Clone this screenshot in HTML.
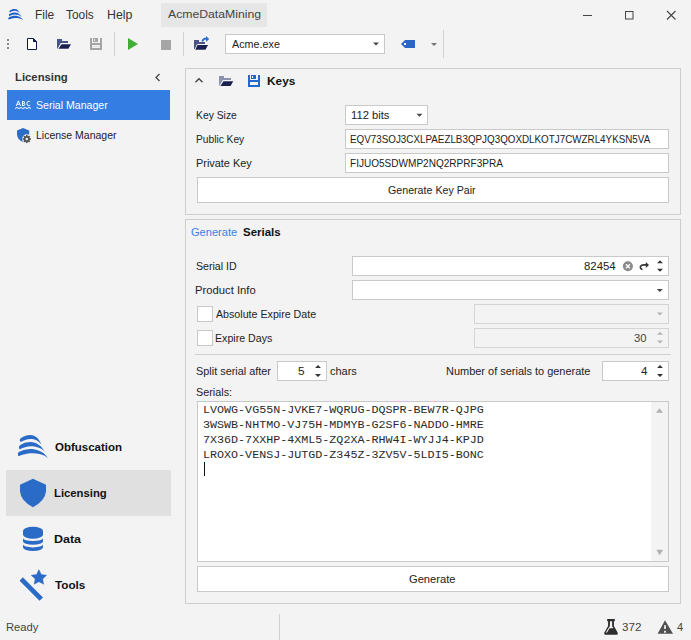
<!DOCTYPE html>
<html><head><meta charset="utf-8">
<style>
html,body{margin:0;padding:0;background:#f3f3f3;}
body{width:691px;height:640px;overflow:hidden;background:#f3f3f3;position:relative;font-family:"Liberation Sans",sans-serif;}
.a{position:absolute;box-sizing:border-box;}
.t{position:absolute;white-space:pre;line-height:20px;font-family:"Liberation Sans",sans-serif;transform-origin:0 0;}
.box{position:absolute;box-sizing:border-box;border:1px solid #c9c9c9;background:#fff;}
.pnl{position:absolute;box-sizing:border-box;border:1px solid #cdcdcd;background:#f3f3f3;}
.sep{position:absolute;background:#cfcfcf;}
svg{position:absolute;overflow:visible;}
</style></head><body>
<!-- title bar -->
<div class="a" style="left:161px;top:3px;width:106px;height:24px;background:#e6e6e6"></div>
<svg style="left:0;top:0" width="691" height="30" viewBox="0 0 691 30">
  <g fill="#1f5fc8" transform="translate(-0.6 -208.6) scale(0.5)"><path d="M20.50 438.50 C23.40 436.30 26.40 435.10 30.40 435.10 C35.40 435.10 38.80 438.60 41.30 444.60 C38.30 440.40 34.90 438.90 30.40 438.90 C26.40 438.90 23.90 440.40 21.20 441.70 C19.70 442.20 19.30 439.50 20.50 438.50 Z"/><path d="M19.70 445.40 C22.60 443.20 26.80 442.00 30.80 442.00 C35.80 442.00 42.10 445.80 44.60 451.80 C41.60 447.60 35.30 446.30 30.80 446.30 C26.80 446.30 23.10 447.80 20.40 449.10 C18.90 449.60 18.50 446.40 19.70 445.40 Z"/><path d="M18.60 452.30 C21.50 450.10 27.80 448.90 31.80 448.90 C36.80 448.90 45.40 452.40 47.90 458.40 C44.90 454.20 36.30 453.30 31.80 453.30 C27.80 453.30 22.00 454.80 19.30 456.10 C17.80 456.60 17.40 453.30 18.60 452.30 Z"/></g>
  <rect x="583" y="15" width="9" height="1" fill="#444"/>
  <rect x="625.5" y="11.5" width="7.5" height="7.5" fill="none" stroke="#444" stroke-width="1"/>
  <path d="M667 11 L675.5 19.5 M675.5 11 L667 19.5" stroke="#444" stroke-width="1.1" fill="none"/>
</svg>
<!-- toolbar -->
<svg style="left:0;top:30px" width="691" height="30" viewBox="0 30 691 30">
  <g fill="#8a8a8a"><rect x="7" y="39" width="2" height="2"/><rect x="7" y="43" width="2" height="2"/><rect x="7" y="47" width="2" height="2"/></g>
  <!-- new doc -->
  <path d="M27.5 38.5 H33.5 L36.5 41.5 V49.5 H27.5 Z" fill="#fff" stroke="#0f1a4a" stroke-width="1"/>
  <path d="M33 38 V42 H37 Z" fill="#0f1a4a"/>
  <!-- open folder -->
  <path d="M57 39 H62 V41 H68 V43 H61 L57.6 48.5 H57 Z" fill="#4b5488"/>
  <path d="M60.8 43.6 H72 L68.8 49.4 H57.6 Z" fill="#fff"/>
  <path d="M61.5 44.2 H71 L68.4 48.8 H58.4 Z" fill="#1a2150"/>
  <!-- save gray -->
  <g fill="#a5a5a5">
    <rect x="90" y="38" width="2" height="12"/><rect x="100" y="38" width="2" height="12"/>
    <rect x="90" y="48" width="12" height="2"/><rect x="90" y="43" width="12" height="2"/>
    <path d="M93 38 H98 V42 H93 Z M94 39 V41 H95 V39 Z" fill-rule="evenodd"/>
    <rect x="92" y="46" width="8" height="1" fill="#e0e0e0"/>
  </g>
  <rect x="114" y="32" width="1" height="24" fill="#d2d2d2"/>
  <path d="M128 38 L138 44 L128 50 Z" fill="#41ad35"/>
  <rect x="161" y="40" width="10" height="10" fill="#a5a5a5"/>
  <rect x="183" y="32" width="1" height="24" fill="#d2d2d2"/>
  <!-- open export -->
  <path d="M194 40 H199 V42 H205 V44 H198 L194.6 49 H194 Z" fill="#4b5488"/>
  <path d="M196.8 44.4 H209 L205.9 50.3 H194.6 Z" fill="#fff"/>
  <path d="M197.5 45 H208 L205.5 49.7 H195.2 Z" fill="#1a2150"/>
  <path d="M202.2 41.5 Q203 38.5 206.5 38.4" stroke="#2a6dd6" stroke-width="1.8" fill="none"/>
  <path d="M206 36 L209.2 39 L206 42 Z" fill="#2a6dd6"/>
  <rect x="443" y="30" width="1" height="28" fill="#d2d2d2"/>
  <!-- tag -->
  <path d="M401 44 L405 40 H415 V48 H405 Z M404 43 V45 H406 V43 Z" fill="#2a66c8" fill-rule="evenodd"/>
  <path d="M431 43 H437 L434 46 Z" fill="#777"/>
</svg>
<div class="box" style="left:225px;top:34px;width:160px;height:20px"></div>
<svg style="left:0;top:0" width="691" height="640" viewBox="0 0 691 640">
  <path d="M373 42.5 H379 L376 45.5 Z" fill="#444"/>
</svg>

<!-- sidebar -->
<svg style="left:0;top:60px" width="185" height="100" viewBox="0 60 185 100">
  <path d="M159.5 74 L156 77.5 L159.5 81" stroke="#444" stroke-width="1.3" fill="none"/>
</svg>
<div class="a" style="left:7px;top:90px;width:163px;height:30px;background:#337de3"></div>
<svg style="left:0;top:90px" width="185" height="60" viewBox="0 90 185 60">
  <g fill="none" stroke="#fff" stroke-width="1">
    <path d="M16.3 106 L18.4 100.8 L20.5 106 M17.2 104.2 H19.6"/>
    <path d="M22.5 101 V106 M22 101.5 H23.7 Q24.5 101.5 24.5 102.4 Q24.5 103.3 23.7 103.4 H22.5 M22 105.5 H23.9 Q24.8 105.5 24.8 104.5 Q24.8 103.5 23.9 103.4"/>
    <path d="M30.2 101.8 Q29.7 101.3 28.8 101.3 Q26.9 101.4 26.9 103.5 Q26.9 105.6 28.8 105.7 Q29.7 105.7 30.2 105.2"/>
    <path d="M15 108.5 L17 107.5 L19 108.5 L21 107.5 L23 108.5 L25 107.5 L27 108.5 L29 107.5 L31 108.5"/>
  </g>
  <path d="M23 128 L17 130.6 V134.5 Q17.4 139.8 23 142 Q28.6 139.8 29.2 134.5 V130.6 Z" fill="#2c6cc9"/>
  <g transform="translate(26.8 139)">
    <circle r="4.7" fill="#f3f3f3"/>
    <g fill="#555">
      <circle r="3"/>
      <rect x="-0.8" y="-4.1" width="1.6" height="8.2"/>
      <rect x="-4.1" y="-0.8" width="8.2" height="1.6"/>
      <rect x="-0.8" y="-4.1" width="1.6" height="8.2" transform="rotate(45)"/>
      <rect x="-4.1" y="-0.8" width="8.2" height="1.6" transform="rotate(45)"/>
    </g>
    <circle r="1.2" fill="#f3f3f3"/>
  </g>
</svg>
<div class="a" style="left:6px;top:470px;width:165px;height:46px;background:#e0e0e0"></div>
<svg style="left:0;top:420px" width="185" height="190" viewBox="0 420 185 190">
  <g fill="#2a6bc8"><path d="M20.50 438.50 C23.40 436.30 26.40 435.10 30.40 435.10 C35.40 435.10 38.80 438.60 41.30 444.60 C38.30 440.40 34.90 438.90 30.40 438.90 C26.40 438.90 23.90 440.40 21.20 441.70 C19.70 442.20 19.30 439.50 20.50 438.50 Z"/><path d="M19.70 445.40 C22.60 443.20 26.80 442.00 30.80 442.00 C35.80 442.00 42.10 445.80 44.60 451.80 C41.60 447.60 35.30 446.30 30.80 446.30 C26.80 446.30 23.10 447.80 20.40 449.10 C18.90 449.60 18.50 446.40 19.70 445.40 Z"/><path d="M18.60 452.30 C21.50 450.10 27.80 448.90 31.80 448.90 C36.80 448.90 45.40 452.40 47.90 458.40 C44.90 454.20 36.30 453.30 31.80 453.30 C27.80 453.30 22.00 454.80 19.30 456.10 C17.80 456.60 17.40 453.30 18.60 452.30 Z"/></g>
  <path d="M32.9 478.7 L20 484.7 V491.2 Q20.6 500.5 32.9 507.3 Q45.2 500.5 46 491.2 V484.7 Z" fill="#2a6bc8"/>
  <g fill="#2a6bc8">
    <path d="M23 531 A10 4.2 0 0 1 43 531 V534.4 A10 4.3 0 0 1 23 534.4 Z"/>
    <path d="M23 538.2 A10 2.8 0 0 0 43 538.2 V541.6 A10 3.2 0 0 1 23 541.6 Z"/>
    <path d="M23 544.6 A10 2.8 0 0 0 43 544.6 V547.2 A10 3.9 0 0 1 23 547.2 Z"/>
  </g>
  <path d="M22.8 577.3 L19.6 580.8 L39.5 600.7 L43 597.5 Z" fill="#2a6bc8"/>
  <path fill="#2a6bc8" stroke="#2a6bc8" stroke-width="0.4" stroke-linejoin="round" d="M38.90 569.60 L41.25 574.46 L46.60 575.20 L42.70 578.94 L43.66 584.25 L38.90 581.70 L34.14 584.25 L35.10 578.94 L31.20 575.20 L36.55 574.46 Z"/>
</svg>

<!-- Keys panel -->
<div class="pnl" style="left:185px;top:68px;width:496px;height:147px"></div>
<svg style="left:185px;top:68px" width="496" height="40" viewBox="185 68 496 40">
  <path d="M195.5 82.3 L199 78.8 L202.5 82.3" stroke="#444" stroke-width="1.4" fill="none"/>
  <path d="M219 76 H224 V78 H231 V80 H223 L219.6 85.5 H219 Z" fill="#8d92ad"/>
  <path d="M222.8 80.6 H234.2 L231 86.6 H219.5 Z" fill="#f3f3f3"/>
  <path d="M223.5 81.2 H233.2 L230.6 86 H220.4 Z" fill="#1a2150"/>
  <g fill="#2466d0">
    <rect x="248" y="75" width="2" height="12"/><rect x="258" y="75" width="2" height="12"/>
    <rect x="248" y="85" width="12" height="2"/><rect x="248" y="80" width="12" height="2"/>
    <path d="M251 75 H256 V79 H251 Z M252 76 V78 H253 V76 Z" fill-rule="evenodd"/>
  </g>
</svg>
<div class="box" style="left:345px;top:105px;width:83px;height:20px"></div>
<div class="box" style="left:345px;top:129px;width:324px;height:20px"></div>
<div class="box" style="left:345px;top:153px;width:324px;height:20px"></div>
<div class="box" style="left:197px;top:177px;width:472px;height:26px"></div>

<!-- Serials panel -->
<div class="pnl" style="left:185px;top:219px;width:496px;height:385px"></div>
<div class="box" style="left:352px;top:256px;width:317px;height:20px"></div>
<div class="box" style="left:352px;top:280px;width:317px;height:20px"></div>
<div class="box" style="left:197px;top:306px;width:16px;height:16px"></div>
<div class="box" style="left:197px;top:330px;width:16px;height:16px"></div>
<div class="box" style="left:474px;top:304px;width:195px;height:20px;background:#f3f3f3;border-color:#d4d4d4"></div>
<div class="box" style="left:474px;top:328px;width:195px;height:20px;background:#f3f3f3;border-color:#d4d4d4"></div>
<div class="sep" style="left:195px;top:354px;width:476px;height:1px"></div>
<div class="box" style="left:277px;top:361px;width:50px;height:20px"></div>
<div class="box" style="left:602px;top:361px;width:67px;height:20px"></div>
<div class="box" style="left:197px;top:401px;width:472px;height:161px"></div>
<div class="a" style="left:651px;top:402px;width:17px;height:159px;background:#f3f3f3"></div>
<div class="a" style="left:204px;top:462px;width:1px;height:14px;background:#111"></div>
<div class="box" style="left:197px;top:566px;width:472px;height:26px"></div>
<svg style="left:0;top:0" width="691" height="640" viewBox="0 0 691 640">
  <!-- key size arrow -->
  <path d="M416.5 113.8 H422.5 L419.5 116.8 Z" fill="#444"/>
  <!-- serial id icons -->
  <circle cx="627.9" cy="266.2" r="5" fill="#8a8a8a"/>
  <path d="M625.9 264.2 L629.9 268.2 M629.9 264.2 L625.9 268.2" stroke="#fff" stroke-width="1.3"/>
  <path d="M642.4 269.6 Q639.6 268.2 640.6 266.2 Q641.6 264.8 644.2 264.9 H647" stroke="#333" stroke-width="1.6" fill="none"/>
  <path d="M645.8 261.9 L649 264.9 L645.8 267.9 Z" fill="#333"/>
  <path d="M657 263.2 L660 260.2 L663 263.2 Z M657 268.8 L660 271.8 L663 268.8 Z" fill="#333"/>
  <!-- product info arrow -->
  <path d="M656.8 289 H662.8 L659.8 292 Z" fill="#444"/>
  <!-- disabled -->
  <path d="M656.8 312.5 H662.8 L659.8 315.5 Z" fill="#b5b5b5"/>
  <path d="M657 334.8 L660 331.8 L663 334.8 Z M657 340.6 L660 343.6 L663 340.6 Z" fill="#b5b5b5"/>
  <!-- spins -->
  <path d="M315 368.1 L318 365.1 L321 368.1 Z M315 373.9 L318 376.9 L321 373.9 Z" fill="#333"/>
  <path d="M657 368.1 L660 365.1 L663 368.1 Z M657 373.9 L660 376.9 L663 373.9 Z" fill="#333"/>
  <!-- textarea scroll arrows -->
  <path d="M656 412.8 L659.5 408.2 L663 412.8 Z" fill="#b0b0b0"/>
  <path d="M656.4 549.8 H663 L659.7 555.2 Z" fill="#b0b0b0"/>
  <!-- status -->
  <rect x="279" y="614" width="1" height="26" fill="#d0d0d0"/>
  <path d="M607.2 619 H614.8 V621.2 H613.9 V626 L617.6 632.4 Q618.4 634.7 616 634.7 H606 Q603.6 634.7 604.4 632.4 L608.1 626 V621.2 H607.2 Z" fill="#2d2d2d"/>
  <path d="M610 621.3 H612.1 V626.2 L613.5 628.2 H609.6 L606.9 632.8 L605.9 632.3 L609.9 626 Z" fill="#f3f3f3"/>
  <path d="M665 620.3 L673 633.7 H657.6 Z" fill="#505050"/>
  <rect x="664.1" y="625.2" width="1.8" height="3.7" fill="#f3f3f3"/>
  <rect x="664.1" y="630.8" width="1.8" height="1.9" fill="#f3f3f3"/>
</svg>
<div class="t" style="left:34.61px;top:4.50px;font-size:12px;font-weight:400;color:#333;transform:scaleX(0.9889)">File</div>
<div class="t" style="left:66.30px;top:4.50px;font-size:12px;font-weight:400;color:#333;transform:scaleX(0.9893)">Tools</div>
<div class="t" style="left:106.67px;top:4.50px;font-size:12px;font-weight:400;color:#333;transform:scaleX(1.0304)">Help</div>
<div class="t" style="left:167.50px;top:4.30px;font-size:11px;font-weight:400;color:#444;transform:scaleX(1.1108)">AcmeDataMining</div>
<div class="t" style="left:232.00px;top:34.00px;font-size:11px;font-weight:400;color:#222;transform:scaleX(0.9792)">Acme.exe</div>
<div class="t" style="left:14.87px;top:67.40px;font-size:11px;font-weight:700;color:#333;transform:scaleX(1.0280)">Licensing</div>
<div class="t" style="left:35.54px;top:94.70px;font-size:11px;font-weight:400;color:#fff;transform:scaleX(0.9616)">Serial Manager</div>
<div class="t" style="left:35.55px;top:124.80px;font-size:11px;font-weight:400;color:#222;transform:scaleX(0.9542)">License Manager</div>
<div class="t" style="left:267.12px;top:70.80px;font-size:11px;font-weight:700;color:#111;transform:scaleX(1.0760)">Keys</div>
<div class="t" style="left:195.56px;top:105.10px;font-size:11px;font-weight:400;color:#222;transform:scaleX(0.9405)">Key Size</div>
<div class="t" style="left:195.57px;top:129.00px;font-size:11px;font-weight:400;color:#222;transform:scaleX(0.9275)">Public Key</div>
<div class="t" style="left:195.51px;top:152.90px;font-size:11px;font-weight:400;color:#222;transform:scaleX(0.9909)">Private Key</div>
<div class="t" style="left:350.58px;top:105.00px;font-size:11px;font-weight:400;color:#222;transform:scaleX(1.0194)">112 bits</div>
<div class="t" style="left:349.71px;top:129.00px;font-size:11px;font-weight:400;color:#222;transform:scaleX(0.8940)">EQV73SOJ3CXLPAEZLB3QPJQ3QOXDLKOTJ7CWZRL4YKSN5VA</div>
<div class="t" style="left:349.69px;top:152.90px;font-size:11px;font-weight:400;color:#222;transform:scaleX(0.9133)">FIJUO5SDWMP2NQ2RPRF3PRA</div>
<div class="t" style="left:387.83px;top:179.80px;font-size:11px;font-weight:400;color:#222;transform:scaleX(0.9685)">Generate Key Pair</div>
<div class="t" style="left:190.69px;top:221.60px;font-size:11px;font-weight:400;color:#3b7ee6;transform:scaleX(1.0068)">Generate</div>
<div class="t" style="left:243.30px;top:221.60px;font-size:11px;font-weight:700;color:#111;transform:scaleX(1.0444)">Serials</div>
<div class="t" style="left:195.54px;top:256.00px;font-size:11px;font-weight:400;color:#222;transform:scaleX(0.9634)">Serial ID</div>
<div class="t" style="left:583.77px;top:256.00px;font-size:11px;font-weight:400;color:#222;transform:scaleX(1.0345)">82454</div>
<div class="t" style="left:195.48px;top:279.80px;font-size:11px;font-weight:400;color:#222;transform:scaleX(1.0224)">Product Info</div>
<div class="t" style="left:216.00px;top:303.80px;font-size:11px;font-weight:400;color:#222;transform:scaleX(0.9689)">Absolute Expire Date</div>
<div class="t" style="left:215.03px;top:328.00px;font-size:11px;font-weight:400;color:#222;transform:scaleX(0.9655)">Expire Days</div>
<div class="t" style="left:633.97px;top:328.10px;font-size:11px;font-weight:400;color:#444;transform:scaleX(1.0273)">30</div>
<div class="t" style="left:195.51px;top:361.20px;font-size:11px;font-weight:400;color:#222;transform:scaleX(0.9893)">Split serial after</div>
<div class="t" style="left:297.92px;top:361.00px;font-size:11px;font-weight:400;color:#222;transform:scaleX(1.0800)">5</div>
<div class="t" style="left:329.50px;top:361.20px;font-size:11px;font-weight:400;color:#222;transform:scaleX(0.9962)">chars</div>
<div class="t" style="left:445.50px;top:361.20px;font-size:11px;font-weight:400;color:#222;transform:scaleX(0.9965)">Number of serials to generate</div>
<div class="t" style="left:640.60px;top:361.00px;font-size:11px;font-weight:400;color:#222;transform:scaleX(1.0500)">4</div>
<div class="t" style="left:195.62px;top:381.60px;font-size:11px;font-weight:400;color:#222;transform:scaleX(0.9829)">Serials:</div>
<div class="t" style="left:408.59px;top:568.80px;font-size:11px;font-weight:400;color:#222;transform:scaleX(1.0136)">Generate</div>
<div class="t" style="left:55.00px;top:436.60px;font-size:11px;font-weight:700;color:#111;transform:scaleX(1.0453)">Obfuscation</div>
<div class="t" style="left:53.97px;top:482.90px;font-size:11px;font-weight:700;color:#111;transform:scaleX(1.0260)">Licensing</div>
<div class="t" style="left:54.07px;top:529.10px;font-size:11px;font-weight:700;color:#111;transform:scaleX(1.1348)">Data</div>
<div class="t" style="left:55.20px;top:574.80px;font-size:11px;font-weight:700;color:#111;transform:scaleX(1.0643)">Tools</div>
<div class="t" style="left:6.18px;top:616.70px;font-size:11px;font-weight:400;color:#444;transform:scaleX(1.0194)">Ready</div>
<div class="t" style="left:622.25px;top:617.00px;font-size:11px;font-weight:400;color:#444;transform:scaleX(1.0529)">372</div>
<div class="t" style="left:677.00px;top:617.00px;font-size:11px;font-weight:400;color:#444;transform:scaleX(1.0000)">4</div>
<div class="t" style="left:202.78px;top:401.00px;font-family:'Liberation Mono',monospace;font-size:12px;color:#2a2a2a;transform:scale(0.9747,0.8889)">LVOWG-VG55N-JVKE7-WQRUG-DQSPR-BEW7R-QJPG</div>
<div class="t" style="left:202.78px;top:416.00px;font-family:'Liberation Mono',monospace;font-size:12px;color:#2a2a2a;transform:scale(0.9747,0.8889)">3WSWB-NHTMO-VJ75H-MDMYB-G2SF6-NADDO-HMRE</div>
<div class="t" style="left:202.78px;top:431.00px;font-family:'Liberation Mono',monospace;font-size:12px;color:#2a2a2a;transform:scale(0.9747,0.8889)">7X36D-7XXHP-4XML5-ZQ2XA-RHW4I-WYJJ4-KPJD</div>
<div class="t" style="left:202.78px;top:446.00px;font-family:'Liberation Mono',monospace;font-size:12px;color:#2a2a2a;transform:scale(0.9747,0.8889)">LROXO-VENSJ-JUTGD-Z345Z-3ZV5V-5LDI5-BONC</div>
</body></html>
